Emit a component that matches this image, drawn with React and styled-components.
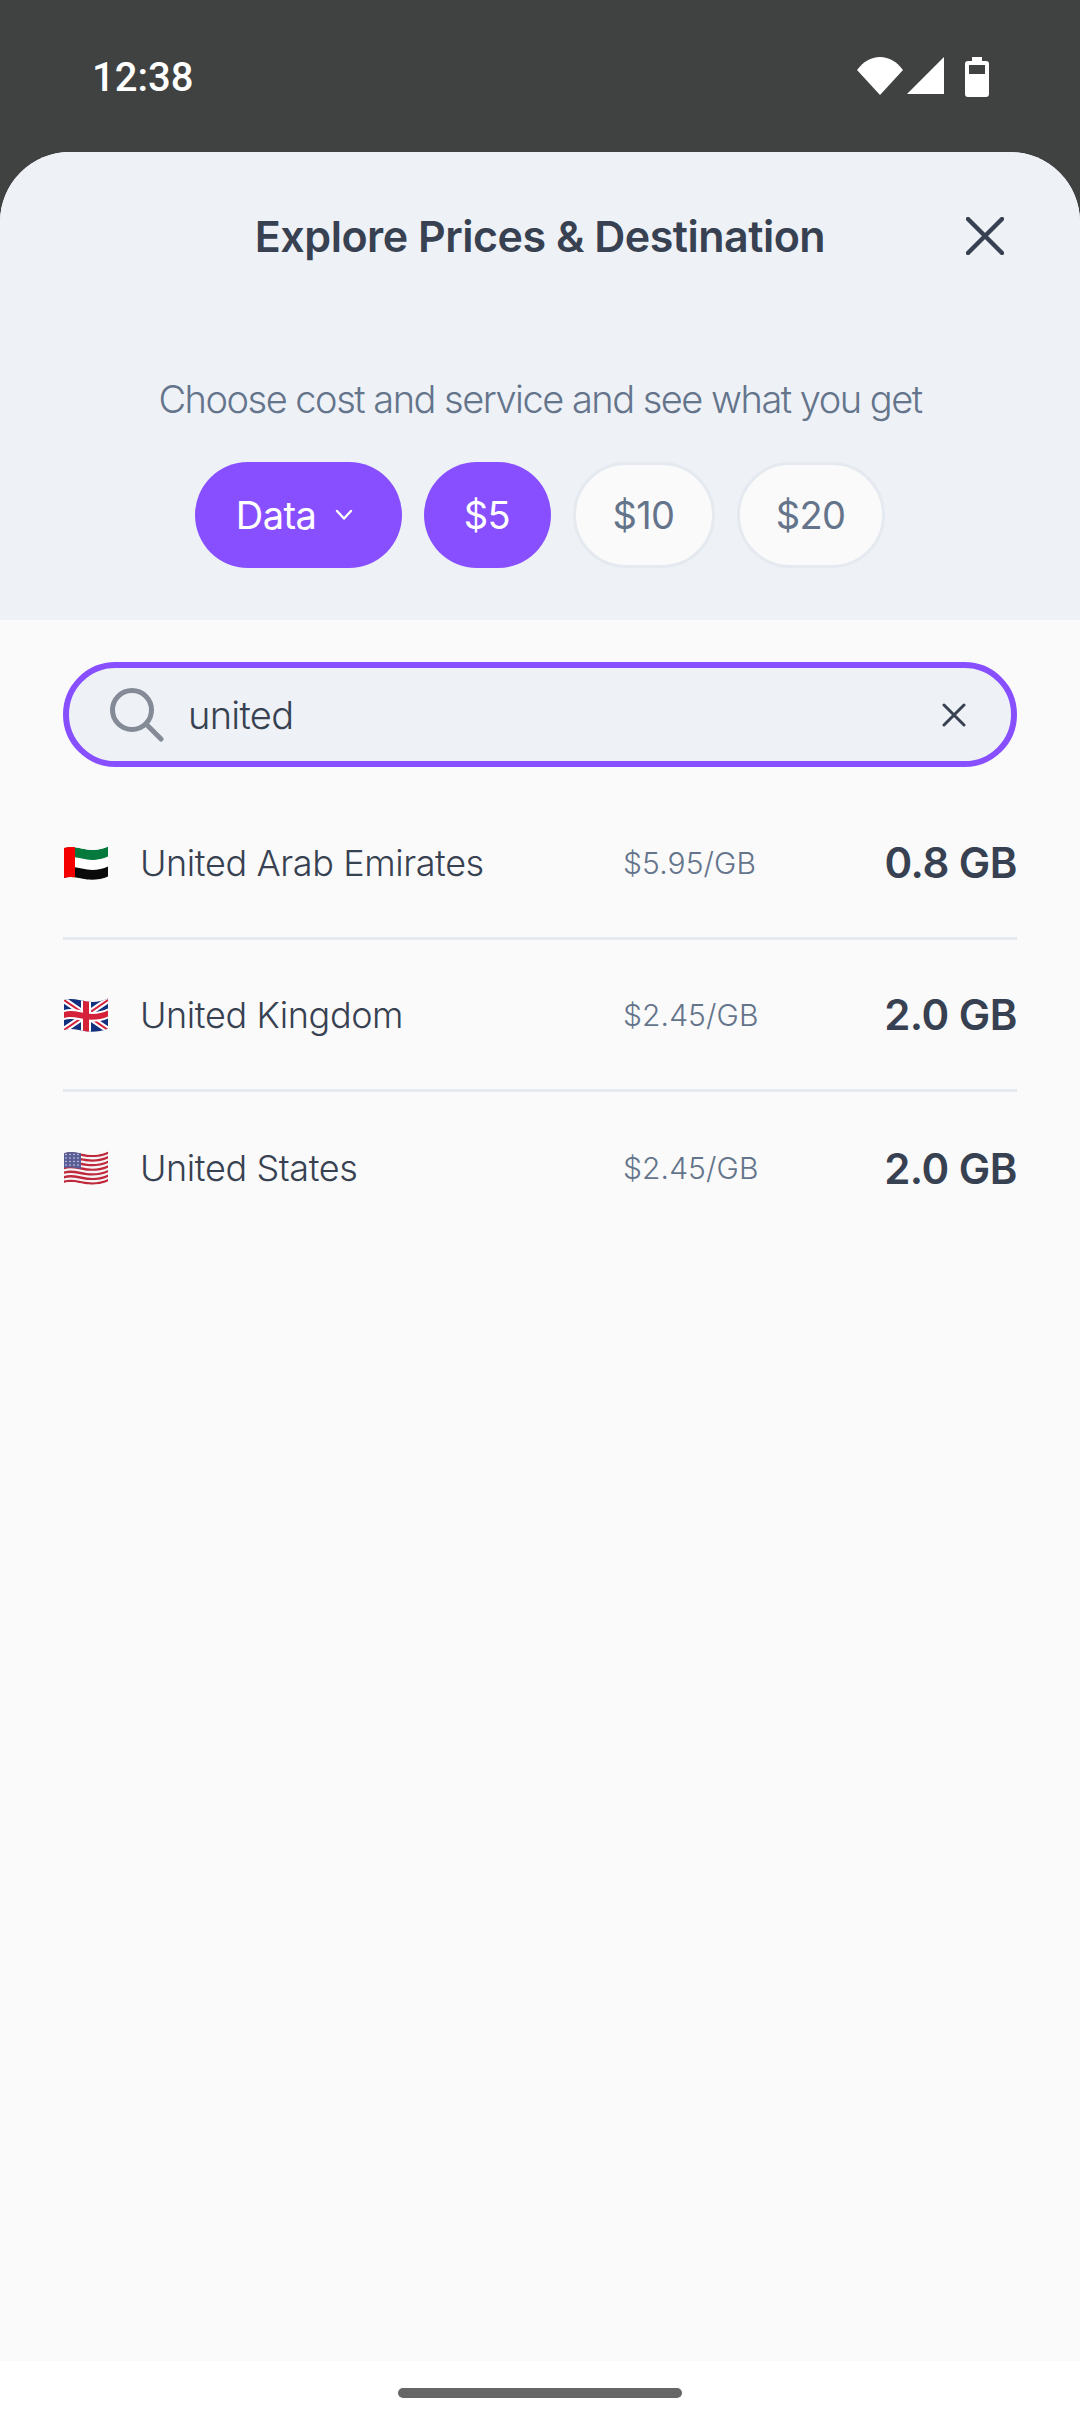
import React from "react";
import styled, { createGlobalStyle } from "styled-components";

const GlobalStyle = createGlobalStyle`
  * { box-sizing: border-box; }
  html, body { margin: 0; padding: 0; background: #fff; }
  body { font-family: "Inter", "Liberation Sans", sans-serif; }
`;

const rows = [
  { name: "United Arab Emirates", price: "$5.95/GB", amount: "0.8 GB", flag: "ae" },
  { name: "United Kingdom", price: "$2.45/GB", amount: "2.0 GB", flag: "gb" },
  { name: "United States", price: "$2.45/GB", amount: "2.0 GB", flag: "us" },
];

const band = (t, b) =>
  `M0 ${t} C8 ${t - 2.5} 16 ${t + 0.5} 23 ${t + 1.5} S38 ${t + 1.5} 44 ${t - 1.5} L44 ${b - 1.5} C38 ${b + 1.5} 30 ${b + 2} 23 ${b + 1.5} S8 ${b - 2.5} 0 ${b} Z`;

const Flag = ({ code }) => {
  const id = `flag-${code}`;
  return (
    <FlagSvg viewBox="0 0 44 36">
      <defs>
        <clipPath id={id}>
          <path d={band(3, 33)} />
        </clipPath>
      </defs>
      <g clipPath={`url(#${id})`}>
        {code === "ae" && (
          <>
            <path d={band(3, 13.5)} fill="#067a3c" />
            <path d={band(13, 23)} fill="#ffffff" />
            <path d={band(23, 33.5)} fill="#0a0a0a" />
            <rect x="0" y="0" width="11" height="36" fill="#f40000" />
          </>
        )}
        {code === "gb" && (
          <>
            <rect width="44" height="36" fill="#12307e" />
            <path d="M0 3 L44 33 M44 3 L0 33" stroke="#fff" strokeWidth="6" />
            <path d="M0 3 L44 33 M44 3 L0 33" stroke="#d5213a" strokeWidth="2" />
            <path d="M22 0 V36" stroke="#fff" strokeWidth="10" />
            <path d={band(13, 23)} fill="#fff" />
            <path d="M22 0 V36" stroke="#d5213a" strokeWidth="6" />
            <path d={band(15, 21)} fill="#d5213a" />
          </>
        )}
        {code === "us" && (
          <>
            <rect width="44" height="36" fill="#f4f4f6" />
            {[3, 7.6, 12.2, 16.8, 21.4, 26, 30.6].map((y) => (
              <path key={y} d={band(y, y + 2.4)} fill="#c0283c" />
            ))}
            <path d="M0 3 C6 1 12 2 17 3 V19 C12 18 6 17 0 18 Z" fill="#5a5d96" />
            {[4.5, 8, 11.5, 15].map((y) =>
              [2, 6, 10, 14].map((x) => (
                <circle key={`${x}-${y}`} cx={x} cy={y} r="0.8" fill="#d6d8ea" />
              ))
            )}
          </>
        )}
      </g>
    </FlagSvg>
  );
};

const App = () => (
  <Page>
    <GlobalStyle />
    <StatusBar>
      <Clock>12:38</Clock>
      <StatusIcons>
        <svg width="46" height="38" viewBox="0 0 46 38">
          <path d="M23 38 L0 13 C6 5 14 0 23 0 S40 5 46 13 Z" fill="#fff" />
        </svg>
        <svg width="38" height="38" viewBox="0 0 38 38">
          <path d="M37 0 V37 H0 Z" fill="#fff" />
        </svg>
        <BatteryIcon width="24" height="40" viewBox="0 0 24 40">
          <path
            d="M7 0 H17 V4 H21 A3 3 0 0 1 24 7 V37 A3 3 0 0 1 21 40 H3 A3 3 0 0 1 0 37 V7 A3 3 0 0 1 3 4 H7 Z"
            fill="#fff"
          />
          <rect x="4" y="8" width="16" height="9" fill="#404241" />
        </BatteryIcon>
      </StatusIcons>
    </StatusBar>

    <Sheet>
      <SheetHeader>
        <TitleRow>
          <Title>Explore Prices &amp; Destination</Title>
          <CloseButton>
            <svg width="38" height="38" viewBox="0 0 38 38">
              <path
                d="M2 2 L36 36 M36 2 L2 36"
                stroke="#374151"
                strokeWidth="4.5"
                strokeLinecap="round"
              />
            </svg>
          </CloseButton>
        </TitleRow>
        <Subtitle>Choose cost and service and see what you get</Subtitle>
        <Pills>
          <DataPill $active $width={207}>
            Data
            <svg width="20" height="12" viewBox="0 0 20 12">
              <path
                d="M3 2 L10 9.5 L17 2"
                fill="none"
                stroke="#fff"
                strokeWidth="2.4"
                strokeLinecap="round"
                strokeLinejoin="round"
              />
            </svg>
          </DataPill>
          <Pill $active $width={127}>$5</Pill>
          <Pill $width={142}>$10</Pill>
          <Pill $width={148}>$20</Pill>
        </Pills>
      </SheetHeader>

      <Content>
        <SearchBox>
          <svg width="54" height="54" viewBox="0 0 54 54">
            <circle cx="22" cy="22" r="19.5" fill="none" stroke="#858b96" strokeWidth="5" />
            <path d="M36 36 L51 51" stroke="#858b96" strokeWidth="5" strokeLinecap="round" />
          </svg>
          <SearchText>united</SearchText>
          <svg width="24" height="24" viewBox="0 0 24 24">
            <path
              d="M2 2 L22 22 M22 2 L2 22"
              stroke="#374151"
              strokeWidth="3"
              strokeLinecap="round"
            />
          </svg>
        </SearchBox>

        <List>
          {rows.map((row) => (
            <Row key={row.name}>
              <Flag code={row.flag} />
              <Name>{row.name}</Name>
              <Price>{row.price}</Price>
              <Amount>{row.amount}</Amount>
            </Row>
          ))}
        </List>
      </Content>
    </Sheet>

    <NavArea>
      <NavHandle />
    </NavArea>
  </Page>
);

const Page = styled.div`
  width: 1080px;
  height: 2424px;
  display: flex;
  flex-direction: column;
  background: #404241;
  overflow: hidden;
`;
const StatusBar = styled.div`
  height: 152px;
  flex: none;
  display: flex;
  justify-content: space-between;
  align-items: flex-start;
  padding: 57px 91px 0 92px;
  background: #404241;
`;
const Clock = styled.span`
  font-family: "Roboto", sans-serif;
  font-size: 40px;
  line-height: 42px;
  font-weight: 500;
  color: #fff;
`;
const StatusIcons = styled.div`
  display: flex;
  align-items: flex-start;
  gap: 4px;
`;
const BatteryIcon = styled.svg`
  margin-left: 16px;
`;
const Sheet = styled.div`
  flex: 1;
  display: flex;
  flex-direction: column;
  min-height: 0;
  background: #fafafa;
  border-radius: 70px 70px 0 0;
  overflow: hidden;
`;
const SheetHeader = styled.div`
  height: 468px;
  flex: none;
  background: #eef1f6;
  padding-top: 56px;
  display: flex;
  flex-direction: column;
  align-items: center;
`;
const TitleRow = styled.div`
  width: 100%;
  display: grid;
  grid-template-columns: 1fr auto 1fr;
  align-items: center;
  height: 56px;
`;
const Title = styled.h1`
  grid-column: 2;
  margin: 0;
  font-size: 43px;
  line-height: 56px;
  font-weight: 600;
  letter-spacing: -0.5px;
  color: #374151;
`;
const CloseButton = styled.div`
  grid-column: 3;
  justify-self: end;
  display: flex;
  margin-right: 76px;
`;
const Subtitle = styled.p`
  margin: 111px 0 0;
  font-size: 38px;
  line-height: 48px;
  font-weight: 300;
  letter-spacing: -1.5px;
  color: #64748b;
`;
const Pills = styled.div`
  display: flex;
  gap: 22px;
  margin-top: 39px;
  margin-left: -1px;
`;
const Pill = styled.div`
  width: ${(p) => p.$width}px;
  height: 106px;
  display: flex;
  align-items: center;
  justify-content: center;
  gap: 18px;
  border-radius: 53px;
  font-size: 38px;
  letter-spacing: -0.6px;
  font-weight: 400;
  color: ${(p) => (p.$active ? "#fff" : "#64748b")};
  background: ${(p) => (p.$active ? "#874fff" : "#fafafa")};
  border: ${(p) => (p.$active ? "none" : "3px solid #e5e9f0")};
`;
const DataPill = styled(Pill)`
  padding-right: 6px;
`;
const Content = styled.div`
  flex: 1;
  padding: 42px 63px 0;
`;
const SearchBox = styled.div`
  height: 105px;
  display: flex;
  align-items: center;
  padding: 0 45px 0 41px;
  border: 6px solid #874fff;
  border-radius: 53px;
  background: #eef1f6;
`;
const SearchText = styled.span`
  flex: 1;
  margin-left: 24px;
  font-size: 38px;
  letter-spacing: -0.7px;
  font-weight: 300;
  color: #374151;
`;
const List = styled.div`
  margin-top: 21px;
`;
const Row = styled.div`
  height: 152px;
  display: grid;
  grid-template-columns: 77px 1fr 263px 131px;
  align-items: center;
  border-bottom: 3px solid #e5e9f0;

  &:last-child {
    border-bottom: none;
  }
`;
const FlagSvg = styled.svg`
  width: 44px;
  height: 36px;
  margin-left: 1px;
`;
const Name = styled.span`
  font-size: 36px;
  font-weight: 300;
  letter-spacing: -0.4px;
  color: #374151;
`;
const Price = styled.span`
  font-size: 30px;
  font-weight: 300;
  letter-spacing: 0.1px;
  color: #64748b;
`;
const Amount = styled.span`
  justify-self: end;
  white-space: nowrap;
  font-size: 42px;
  font-weight: 600;
  letter-spacing: -0.5px;
  color: #374151;
`;
const NavArea = styled.div`
  height: 63px;
  flex: none;
  background: #fff;
  display: flex;
  justify-content: center;
  padding-top: 27px;
`;
const NavHandle = styled.div`
  width: 284px;
  height: 10px;
  border-radius: 5px;
  background: #666;
`;

export default App;
